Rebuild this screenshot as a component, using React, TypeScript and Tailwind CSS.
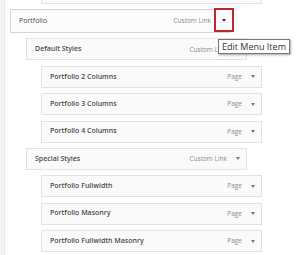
import React from 'react'

interface MenuRow {
    label: string
    type: string
    indent: number
}

const rows: MenuRow[] = [
    { label: 'Default Styles', type: 'Custom Link', indent: 27 },
    { label: 'Portfolio 2 Columns', type: 'Page', indent: 42 },
    { label: 'Portfolio 3 Columns', type: 'Page', indent: 42 },
    { label: 'Portfolio 4 Columns', type: 'Page', indent: 42 },
    { label: 'Special Styles', type: 'Custom Link', indent: 27 },
    { label: 'Portfolio Fullwidth', type: 'Page', indent: 42 },
    { label: 'Portfolio Masonry', type: 'Page', indent: 42 },
    { label: 'Portfolio Fullwidth Masonry', type: 'Page', indent: 42 },
]

const Arrow = () => (
    <span className="ml-[9px] inline-block w-0 h-0 border-l-[2.5px] border-r-[2.5px] border-t-[3.5px] border-l-transparent border-r-transparent border-t-[#777]" />
)

const Row = ({ label, type, indent, first }: MenuRow & { first?: boolean }) => (
    <div
        className={`flex items-center justify-between w-[221px] h-[22px] pl-[8px] pr-[6px] border bg-[#fafafa] ${first ? 'h-[24px] border-[#d4d4d4] bg-[#fcfcfc]' : 'border-[#e2e2e2]'}`}
        style={{ marginLeft: indent }}
    >
        <span className={`text-[7px] text-[#4a4a4a] ${first ? 'font-medium' : 'font-semibold'}`}>
            {label}
        </span>
        <span className="flex items-center">
            <span className="text-[6.5px] text-[#8a8a8a]">{type}</span>
            <Arrow />
        </span>
    </div>
)

export default function App() {
    return (
        <div
            className="flex w-[300px] h-[255px] overflow-hidden bg-white"
            style={{ fontFamily: '"Open Sans", "Noto Sans", sans-serif' }}
        >
            <div className="w-[5px] shrink-0 bg-[#f3f3f3] border-r border-[#e6e6e6]" />
            <div className="relative flex flex-col flex-1 gap-[5.4px] -ml-[6px]">
                <div className="ml-[42px] w-[221px] h-[4px] border border-t-0 border-[#e2e2e2] bg-[#fafafa]" />
                <div className="mt-[-0.4px]">
                    <Row label="Portfolio" type="Custom Link" indent={11} first />
                </div>
                {rows.map((r) => (
                    <Row key={r.label} {...r} />
                ))}

                <div className="absolute left-[215px] top-[8px] w-[20px] h-[24px] border-2 border-[#c4242b] flex items-center justify-center bg-[#fcfcfc]">
                    <span className="inline-block w-0 h-0 border-l-[2.5px] border-r-[2.5px] border-t-[3.5px] border-l-transparent border-r-transparent border-t-[#333]" />
                </div>

                <div className="absolute left-[219px] top-[39px] px-[3px] py-[1px] bg-white border border-[#777] shadow-[1px_1px_2px_rgba(0,0,0,0.35)] text-[9px] leading-[11px] text-[#333] whitespace-nowrap">
                    Edit Menu Item
                </div>
            </div>
        </div>
    )
}
